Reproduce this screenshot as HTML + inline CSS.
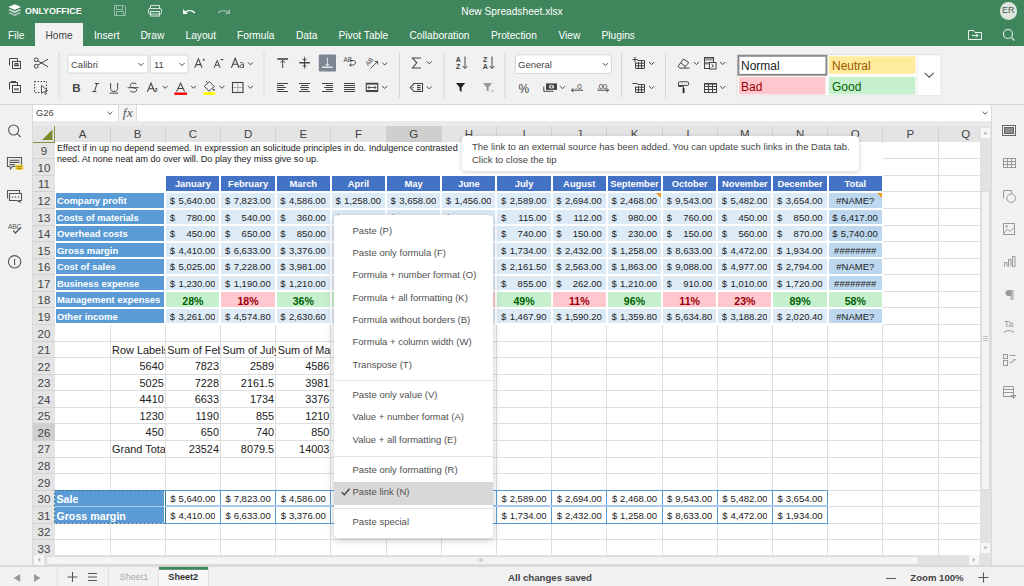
<!DOCTYPE html><html><head><meta charset="utf-8"><style>
*{margin:0;padding:0;box-sizing:border-box}
html,body{width:1024px;height:586px;overflow:hidden;background:#f1f1f1;font-family:"Liberation Sans",sans-serif;position:relative}
.a{position:absolute}
.tab{position:absolute;top:23px;height:23px;line-height:25.5px;color:#fff;font-size:10.2px;white-space:nowrap}
.gl{position:absolute;background:#dedede}
.ch{position:absolute;top:126px;height:16px;line-height:17px;text-align:center;color:#444;font-size:11.5px}
.rh{position:absolute;left:33px;width:22px;text-align:center;color:#444;font-size:11.5px}
.c{position:absolute;white-space:nowrap;overflow:hidden;font-size:10px;color:#222}
</style></head><body>
<div class="a" style="left:0;top:0;width:1024px;height:46px;background:#40865c"></div>
<div class="a" style="left:35px;top:23px;width:48px;height:23px;background:#f1f1f1"></div>
<svg class="a" style="left:0;top:0" width="1024" height="104" viewBox="0 0 1024 104">
<path d="M14.7 4.3L21 7.1L14.7 9.9L8.4 7.1Z" fill="#fff"/>
<path d="M9 9.6L14.7 12.2L20.4 9.6" fill="none" stroke="#fff" stroke-width="1.3" opacity="0.85"/>
<path d="M9 12.6L14.7 15.2L20.4 12.6" fill="none" stroke="#fff" stroke-width="1.3" opacity="0.6"/>
<g opacity="0.45" fill="none" stroke="#fff" stroke-width="1"><path d="M114.5 5.5H124L125.5 7V15.5H114.5Z"/><path d="M116.5 5.5V9.5H122.5V5.5"/><path d="M116.5 15.5V11.5H123.5V15.5"/></g>
<g opacity="0.8" fill="none" stroke="#fff" stroke-width="1"><path d="M150.5 8.5V5.5H159.5V8.5"/><rect x="148.5" y="8.5" width="13" height="5.5" rx="1.5"/><rect x="150.5" y="11.5" width="9" height="4.5"/></g>
<path d="M183 9L183 14L188 14L186.3 12.4C188.5 10.8 191.8 11 194.2 13.4L195.2 12.4C192.4 9.6 188.4 9.2 185.4 11.4Z" fill="#fff"/>
<path d="M230 9L230 14L225 14L226.7 12.4C224.5 10.8 221.2 11 218.8 13.4L217.8 12.4C220.6 9.6 224.6 9.2 227.6 11.4Z" fill="#fff" opacity="0.45"/>
<g fill="none" stroke="#fff" stroke-width="1" opacity="0.9"><path d="M968.5 30.5V39.5H981.5V32.5H975L973.5 30.5Z"/><path d="M972 35.5H978M976 33.5L978 35.5L976 37.5"/></g>
<g fill="none" stroke="#fff" stroke-width="1.1" opacity="0.9"><circle cx="1008" cy="34" r="4.5"/><path d="M1011.3 37.3L1014.5 40.5"/></g>
<g fill="none" stroke="#444" stroke-width="1"><path d="M9.5 65.5V58.5H17.5V61"/><rect x="12.5" y="61.5" width="8" height="7" fill="#f7f7f7"/><path d="M14.5 63.5H18.5M14.5 65.5H18.5" /></g>
<rect x="14" y="64" width="5" height="2.5" fill="#444" opacity="0.6"/>
<g fill="none" stroke="#444" stroke-width="1"><circle cx="36.2" cy="59.8" r="1.9"/><circle cx="36.2" cy="66.2" r="1.9"/><path d="M37.8 60.9L48 66.8M37.8 65.1L48 59.2"/></g>
<g fill="none" stroke="#444" stroke-width="1"><path d="M9.5 89.5V82.5H17.5V85"/><rect x="12.5" y="85.5" width="8" height="7" fill="#f7f7f7"/></g><rect x="11" y="81" width="5" height="1.6" fill="#444"/><rect x="14" y="88" width="5" height="2.5" fill="#444" opacity="0.6"/>
<rect x="34.5" y="81.5" width="12" height="11" fill="none" stroke="#444" stroke-width="1" stroke-dasharray="1.5 1.5"/><path d="M41.5 85.5L41.5 93.5L43.5 91.5L45.5 94.5L46.5 93.8L44.8 91L47.5 90.5Z" fill="#f7f7f7" stroke="#444" stroke-width="0.9"/>
<rect x="58.5" y="53" width="1" height="45" fill="#d8d8d8"/>
<rect x="263.5" y="53" width="1" height="45" fill="#d8d8d8"/>
<rect x="399.0" y="53" width="1" height="45" fill="#d8d8d8"/>
<rect x="443.5" y="53" width="1" height="45" fill="#d8d8d8"/>
<rect x="504.5" y="53" width="1" height="45" fill="#d8d8d8"/>
<rect x="621.0" y="53" width="1" height="45" fill="#d8d8d8"/>
<rect x="665.0" y="53" width="1" height="45" fill="#d8d8d8"/>
<rect x="68" y="55" width="80" height="18" rx="1.5" fill="#fff" stroke="#d6d6d6" stroke-width="1"/>
<rect x="150.5" y="55" width="37.5" height="18" rx="1.5" fill="#fff" stroke="#d6d6d6" stroke-width="1"/>
<path d="M138.5 63.099999999999994L141 65.6L143.5 63.099999999999994" fill="none" stroke="#444" stroke-width="1"/><path d="M179.5 63.099999999999994L182 65.6L184.5 63.099999999999994" fill="none" stroke="#444" stroke-width="1"/>
<path d="M194.7 67.8L198.4 58.8L202.1 67.8M196 64.6H200.8" fill="none" stroke="#444" stroke-width="1.05"/><path d="M202.2 60.6L203.7 58.6L205.2 60.6Z" fill="#444"/>
<path d="M214.2 67.8L217.2 60.4L220.2 67.8M215.3 65.2H219.1" fill="none" stroke="#444" stroke-width="1"/><rect x="220.6" y="59" width="2.6" height="1.1" fill="#444"/>
<path d="M231.4 67.8L235.2 58.2L239 67.8M232.8 64.3H237.6" fill="none" stroke="#444" stroke-width="1.1"/>
<path d="M240 63.2C240.6 62.4 241.6 62.3 242.4 62.5C243.3 62.8 243.5 63.5 243.5 64.4V67.8M243.5 65C242.5 64.6 241.1 64.6 240.4 65.2C239.6 65.9 239.8 67.2 240.8 67.5C241.9 67.9 243 67.3 243.5 66.4" fill="none" stroke="#444" stroke-width="0.95"/>
<path d="M248.0 62.3L250.5 64.8L253.0 62.3" fill="none" stroke="#444" stroke-width="1"/>
<text x="72.3" y="91.8" font-family="Liberation Sans" font-weight="bold" font-size="11.5" fill="#444">B</text>
<path d="M94.8 83.5H99M92.2 91.6H96.4M97 83.5L94.4 91.6" fill="none" stroke="#444" stroke-width="1"/>
<path d="M110.6 83V88.4C110.6 90.6 112 91.4 114.1 91.4C116.2 91.4 117.6 90.6 117.6 88.4V83" fill="none" stroke="#444" stroke-width="1"/><rect x="109.6" y="92.6" width="8.6" height="1" fill="#444"/>
<path d="M136.4 84.2C135.6 83.4 134.6 83.1 133.3 83.1C131.6 83.1 130.3 84 130.3 85.4C130.3 88.4 136.6 87.2 136.6 90C136.6 91.3 135.4 92.1 133.5 92.1C132 92.1 130.8 91.6 130 90.8" fill="none" stroke="#444" stroke-width="1"/><rect x="127.6" y="87.2" width="11" height="1" fill="#444"/>
<path d="M147.4 91.8L151 83.2L154.6 91.8M148.7 88.8H153.3" fill="none" stroke="#444" stroke-width="1.05"/><text x="154.6" y="92.3" font-family="Liberation Sans" font-size="5.5" font-weight="bold" fill="#444">2</text>
<path d="M162.7 85.8L165.2 88.3L167.7 85.8" fill="none" stroke="#444" stroke-width="1"/>
<path d="M176.6 91.4L180.6 83.2L184.6 91.4M178 88.4H183.2" fill="none" stroke="#444" stroke-width="1.05"/><rect x="174.3" y="92.5" width="12.7" height="2.4" fill="#f00"/>
<path d="M191.0 85.8L193.5 88.3L196.0 85.8" fill="none" stroke="#444" stroke-width="1"/>
<g fill="none" stroke="#444" stroke-width="1"><path d="M204.3 86.2L209.5 81.6L214.2 86.6L209 91.2Z"/><path d="M207.5 82.5L206 81"/></g><circle cx="213.8" cy="89.8" r="1" fill="#444"/><rect x="203.3" y="92.1" width="11.8" height="2.9" fill="#ff0"/>
<path d="M219.5 85.8L222 88.3L224.5 85.8" fill="none" stroke="#444" stroke-width="1"/>
<rect x="232.5" y="82.5" width="10.5" height="10" fill="none" stroke="#444" stroke-width="1.1"/><path d="M237.75 83V92.5M233 87.5H242.5" stroke="#444" stroke-width="0.6" opacity="0.6"/>
<path d="M248.0 85.8L250.5 88.3L253.0 85.8" fill="none" stroke="#444" stroke-width="1"/>
<rect x="277.3" y="58.2" width="10.8" height="1.6" fill="#444"/><path d="M282.7 60V68M280.5 62.6L282.7 60.4L284.9 62.6" fill="none" stroke="#444" stroke-width="1"/>
<rect x="299.3" y="62" width="10.6" height="1.5" fill="#444"/><path d="M304.6 56.8V68.5M302.8 58.8L304.6 60.8L306.4 58.8M302.8 66.6L304.6 64.6L306.4 66.6" fill="none" stroke="#444" stroke-width="1"/>
<rect x="318.8" y="54.4" width="17.2" height="17.1" rx="1" fill="#7c8592"/>
<rect x="322" y="66.5" width="10.8" height="1.5" fill="#e8e8e8"/><path d="M327.4 57.5V66.2" stroke="#e8e8e8" stroke-width="1"/><path d="M325.4 64L327.4 66L329.4 64" fill="none" stroke="#e8e8e8" stroke-width="1"/>
<text x="343.6" y="62.3" font-family="Liberation Sans" font-size="6.3" fill="#444">AB</text><path d="M350 60.5H353.5C355.2 60.5 355.8 62.2 355.2 63.6C354.8 64.6 353.8 65 352.5 65H349.8M351.3 63.6L349.6 65L351.3 66.4" fill="none" stroke="#444" stroke-width="1"/>
<text x="0" y="0" font-family="Liberation Sans" font-size="6.5" fill="#444" transform="translate(368.2 66.2) rotate(-50)">AB</text><path d="M370.5 68.5L377.6 61.5M374.6 61.4L377.7 61.4L377.7 64.5" fill="none" stroke="#444" stroke-width="0.9"/>
<path d="M382.2 62.599999999999994L384.7 65.1L387.2 62.599999999999994" fill="none" stroke="#444" stroke-width="1"/>
<rect x="277" y="83" width="11" height="1" fill="#444"/><rect x="277" y="85" width="7" height="1" fill="#444"/><rect x="277" y="87" width="9" height="1" fill="#444"/><rect x="277" y="89" width="7" height="1" fill="#444"/><rect x="277" y="91" width="11" height="1" fill="#444"/>
<rect x="299" y="83" width="11" height="1" fill="#444"/><rect x="301" y="85" width="7" height="1" fill="#444"/><rect x="300" y="87" width="9" height="1" fill="#444"/><rect x="301" y="89" width="7" height="1" fill="#444"/><rect x="299" y="91" width="11" height="1" fill="#444"/>
<rect x="322" y="83" width="11" height="1" fill="#444"/><rect x="326" y="85" width="7" height="1" fill="#444"/><rect x="324" y="87" width="9" height="1" fill="#444"/><rect x="326" y="89" width="7" height="1" fill="#444"/><rect x="322" y="91" width="11" height="1" fill="#444"/>
<rect x="344" y="83" width="11" height="1" fill="#444"/><rect x="344" y="85" width="11" height="1" fill="#444"/><rect x="344" y="87" width="11" height="1" fill="#444"/><rect x="344" y="89" width="11" height="1" fill="#444"/><rect x="344" y="91" width="11" height="1" fill="#444"/>
<rect x="366.3" y="83.3" width="11.4" height="8.2" fill="none" stroke="#444" stroke-width="1.1"/><rect x="366" y="83" width="12" height="1.6" fill="#444"/><rect x="366" y="90" width="12" height="1.6" fill="#444"/><path d="M368 87.5H376M369.5 86L368 87.5L369.5 89M374.5 86L376 87.5L374.5 89" fill="none" stroke="#444" stroke-width="0.9"/>
<path d="M382.2 86.0L384.7 88.5L387.2 86.0" fill="none" stroke="#444" stroke-width="1"/>
<path d="M421 58H412.5L416.8 62.8L412.5 68H421" fill="none" stroke="#444" stroke-width="1.1"/>
<path d="M426.8 61.3L429.3 63.8L431.8 61.3" fill="none" stroke="#444" stroke-width="1"/>
<path d="M422.5 83.5H414L410.3 87.4L414 91.5H422.5Z" fill="none" stroke="#444" stroke-width="1.1"/><circle cx="413.2" cy="87.4" r="0.7" fill="#444"/><rect x="417" y="85" width="3.5" height="1.2" fill="#444"/><rect x="417" y="87" width="3.5" height="1.2" fill="#444"/><rect x="417" y="89" width="3.5" height="1.2" fill="#444"/>
<path d="M426.8 86.39999999999999L429.3 88.89999999999999L431.8 86.39999999999999" fill="none" stroke="#444" stroke-width="1"/>
<text x="455.8" y="62.4" font-family="Liberation Sans" font-size="7" font-weight="bold" fill="#444">A</text><text x="456" y="68.8" font-family="Liberation Sans" font-size="7" font-weight="bold" fill="#444">Z</text><path d="M465 56.5V68.3M462.6 66L465 68.5L467.4 66" fill="none" stroke="#444" stroke-width="1"/>
<text x="483" y="62.4" font-family="Liberation Sans" font-size="7" font-weight="bold" fill="#444">Z</text><text x="482.8" y="68.8" font-family="Liberation Sans" font-size="7" font-weight="bold" fill="#444">A</text><path d="M492 56.5V68.3M489.6 66L492 68.5L494.4 66" fill="none" stroke="#444" stroke-width="1"/>
<path d="M456 83H465.2L461.6 87.5V92L459.6 90.6V87.5Z" fill="#222"/>
<path d="M483 83H492.2L488.6 87.5V91.5L486.6 90.5V87.5Z" fill="#999"/><path d="M491.3 89.8L493.7 92.2M493.7 89.8L491.3 92.2" stroke="#aaa" stroke-width="0.8"/>
<rect x="515.4" y="54.8" width="96" height="18.6" rx="1.5" fill="#fff" stroke="#d6d6d6" stroke-width="1"/>
<path d="M602.9 63.2L605.4 65.7L607.9 63.2" fill="none" stroke="#444" stroke-width="1"/>
<text x="518.6" y="92.6" font-family="Liberation Sans" font-size="12" fill="#444">%</text>
<path d="M543.8 86.5V91.3H553.5" fill="none" stroke="#444" stroke-width="1"/><rect x="546" y="83.4" width="11" height="6.5" fill="#444"/><ellipse cx="551.5" cy="86.65" rx="2.6" ry="1.9" fill="#f7f7f7"/><circle cx="551.5" cy="86.65" r="1.1" fill="#444"/>
<path d="M560.1 86.2L562.6 88.7L565.1 86.2" fill="none" stroke="#444" stroke-width="1"/>
<text x="575" y="88.5" font-family="Liberation Sans" font-size="8" fill="#444">.0</text><path d="M583 90.2H571.5M573.5 88.4L571.3 90.2L573.5 92" fill="none" stroke="#444" stroke-width="1"/>
<text x="597" y="88.5" font-family="Liberation Sans" font-size="8" fill="#444" letter-spacing="-0.4">.00</text><path d="M597.5 90.2H608.5M606.5 88.4L608.7 90.2L606.5 92" fill="none" stroke="#444" stroke-width="1"/>
<g fill="none" stroke="#444" stroke-width="1"><path d="M637.5 60.5H644.5V68.5H635.5V62.5"/><path d="M638.5 62V68.5M641.5 60.5V68.5M635.5 63.2H644.5M635.5 65.8H644.5"/><path d="M632.5 59.5H637.5M635 57V62"/></g>
<path d="M649.1 62.099999999999994L651.6 64.6L654.1 62.099999999999994" fill="none" stroke="#444" stroke-width="1"/>
<g fill="none" stroke="#444" stroke-width="1"><path d="M637.5 84.5H644.5V92.5H635.5V86.5"/><path d="M638.5 86V92.5M641.5 84.5V92.5M635.5 87.2H644.5M635.5 89.8H644.5"/><path d="M632.5 83.5H637.5"/></g>
<path d="M649.1 86.2L651.6 88.7L654.1 86.2" fill="none" stroke="#444" stroke-width="1"/>
<g fill="none" stroke="#444" stroke-width="1"><path d="M683.5 59L688.8 62.6L683.8 68.1H680L678 66.3Z"/><path d="M680.8 63L685.6 66.5"/><path d="M684 68.1H689.5"/></g>
<path d="M693.9 62.099999999999994L696.4 64.6L698.9 62.099999999999994" fill="none" stroke="#444" stroke-width="1"/>
<g fill="none" stroke="#444" stroke-width="1"><rect x="704.5" y="57.5" width="9" height="11"/><rect x="709.5" y="62.5" width="6.5" height="6.5" fill="#f7f7f7"/><path d="M711.6 64.2L713.6 65.8L711.6 67.4"/></g><rect x="705" y="58" width="8" height="2.5" fill="#444" opacity="0.5"/><rect x="705" y="62" width="4" height="2.5" fill="#444" opacity="0.6"/>
<path d="M720.2 62.099999999999994L722.7 64.6L725.2 62.099999999999994" fill="none" stroke="#444" stroke-width="1"/>
<g fill="none" stroke="#444" stroke-width="1"><rect x="678.5" y="81.8" width="10" height="3.6" rx="0.8"/><path d="M678.5 83.8V86.5H683.5V88"/></g><rect x="682.7" y="88" width="1.8" height="5" fill="#222"/>
<g fill="none" stroke="#444" stroke-width="1"><rect x="704.5" y="83.5" width="12" height="9"/><path d="M708.5 83.5V92.5M712.5 83.5V92.5M704.5 86.5H716.5M704.5 89.5H716.5"/></g><rect x="704" y="83" width="13" height="1.6" fill="#444"/>
<path d="M720.2 86.2L722.7 88.7L725.2 86.2" fill="none" stroke="#444" stroke-width="1"/>
<rect x="737.4" y="54.7" width="203.7" height="41.1" fill="#fff" stroke="#e2e2e2" stroke-width="1"/>
<rect x="738.4" y="55.8" width="88" height="19" fill="#fff" stroke="#8a8a8a" stroke-width="2"/>
<rect x="828.8" y="56.3" width="86.5" height="17.5" fill="#ffeb9c"/>
<rect x="739" y="76.8" width="86.5" height="17.7" fill="#ffc7ce"/>
<rect x="828.8" y="76.8" width="86.5" height="17.7" fill="#c6efce"/>
<path d="M917 55V95.5" stroke="#e8e8e8" stroke-width="1"/>
<path d="M924.6 72.8L929.2 77.2L933.8 72.8" fill="none" stroke="#555" stroke-width="1.1"/>
</svg>
<div class="a" style="left:71px;top:56px;font-size:9.5px;line-height:17px;color:#444">Calibri</div>
<div class="a" style="left:154px;top:56px;font-size:9.5px;line-height:17px;color:#444">11</div>
<div class="a" style="left:518px;top:56px;font-size:9.5px;line-height:17px;color:#444">General</div>
<div class="a" style="left:741px;top:58px;font-size:12px;line-height:16px;color:#222">Normal</div>
<div class="a" style="left:832px;top:58px;font-size:12px;line-height:16px;color:#9c5700">Neutral</div>
<div class="a" style="left:741px;top:78.5px;font-size:12px;line-height:16px;color:#9c0006">Bad</div>
<div class="a" style="left:832px;top:78.5px;font-size:12px;line-height:16px;color:#006100">Good</div>
<div class="tab" style="left:8px;color:#fff">File</div>
<div class="tab" style="left:45.5px;color:#444">Home</div>
<div class="tab" style="left:94px;color:#fff">Insert</div>
<div class="tab" style="left:140.5px;color:#fff">Draw</div>
<div class="tab" style="left:185.5px;color:#fff">Layout</div>
<div class="tab" style="left:237px;color:#fff">Formula</div>
<div class="tab" style="left:296px;color:#fff">Data</div>
<div class="tab" style="left:338.5px;color:#fff">Pivot Table</div>
<div class="tab" style="left:409.5px;color:#fff">Collaboration</div>
<div class="tab" style="left:491px;color:#fff">Protection</div>
<div class="tab" style="left:558.5px;color:#fff">View</div>
<div class="tab" style="left:601.5px;color:#fff">Plugins</div>
<div class="a" style="left:0;top:4.8px;width:1024px;text-align:center;color:#fff;font-size:10.2px;line-height:14px">New Spreadsheet.xlsx</div>
<div class="a" style="left:24.6px;top:4.2px;color:#fff;font-size:9.6px;font-weight:bold;line-height:14px;transform:scaleX(0.93);transform-origin:0 0">ONLYOFFICE</div>
<div class="a" style="left:999.5px;top:2px;width:17.5px;height:17.5px;border-radius:50%;background:#dce6df;color:#4d5f54;font-size:9px;line-height:17.5px;text-align:center">ER</div>
<div class="a" style="left:0;top:105px;width:33px;height:461px;background:#f1f1f1;border-right:1px solid #dadada"></div>
<div class="a" style="left:991px;top:105px;width:33px;height:461px;background:#f1f1f1;border-left:1px solid #dadada"></div>
<div class="a" style="left:0;top:104px;width:1024px;height:1px;background:#d6d6d6"></div>
<div class="a" style="left:33px;top:105px;width:958px;height:21px;background:#eaeaea"></div>
<div class="a" style="left:33px;top:105px;width:85px;height:16px;background:#fff"></div>
<div class="a" style="left:36px;top:105px;font-size:9.3px;line-height:16px;color:#444">G26</div>
<svg class="a" style="left:105px;top:108px" width="10" height="10"><path d="M2.5 3.8L5 6.2L7.5 3.8" fill="none" stroke="#555" stroke-width="1"/></svg>
<div class="a" style="left:118px;top:105px;width:19px;height:16px;background:#f4f4f4;border-left:1px solid #dadada;border-right:1px solid #dadada"></div>
<div class="a" style="left:122.8px;top:104.6px;font-family:'Liberation Serif',serif;font-style:italic;font-size:13.5px;line-height:16px;color:#555;letter-spacing:0.2px">fx</div>
<div class="a" style="left:137px;top:105px;width:854px;height:16px;background:#fff"></div>
<svg class="a" style="left:980px;top:108px" width="10" height="10"><path d="M2.5 3.8L5 6.2L7.5 3.8" fill="none" stroke="#555" stroke-width="1"/></svg>
<div class="a" style="left:55px;top:142px;width:925px;height:413px;background:#fff"></div>
<div class="a" style="left:33px;top:126px;width:947px;height:16px;background:#e4e4e4"></div>
<div class="a" style="left:386.09px;top:126px;width:55.20px;height:16px;background:#cfcfcf"></div>
<div class="gl" style="left:110px;top:126px;width:1px;height:16px;background:#d2d2d2"></div>
<div class="ch" style="left:54.90px;width:55.20px">A</div>
<div class="gl" style="left:165px;top:126px;width:1px;height:16px;background:#d2d2d2"></div>
<div class="ch" style="left:110.10px;width:55.20px">B</div>
<div class="gl" style="left:220px;top:126px;width:1px;height:16px;background:#d2d2d2"></div>
<div class="ch" style="left:165.30px;width:55.20px">C</div>
<div class="gl" style="left:275px;top:126px;width:1px;height:16px;background:#d2d2d2"></div>
<div class="ch" style="left:220.49px;width:55.20px">D</div>
<div class="gl" style="left:330px;top:126px;width:1px;height:16px;background:#d2d2d2"></div>
<div class="ch" style="left:275.69px;width:55.20px">E</div>
<div class="gl" style="left:386px;top:126px;width:1px;height:16px;background:#d2d2d2"></div>
<div class="ch" style="left:330.89px;width:55.20px">F</div>
<div class="gl" style="left:441px;top:126px;width:1px;height:16px;background:#d2d2d2"></div>
<div class="ch" style="left:386.09px;width:55.20px">G</div>
<div class="gl" style="left:496px;top:126px;width:1px;height:16px;background:#d2d2d2"></div>
<div class="ch" style="left:441.29px;width:55.20px">H</div>
<div class="gl" style="left:551px;top:126px;width:1px;height:16px;background:#d2d2d2"></div>
<div class="ch" style="left:496.48px;width:55.20px">I</div>
<div class="gl" style="left:606px;top:126px;width:1px;height:16px;background:#d2d2d2"></div>
<div class="ch" style="left:551.68px;width:55.20px">J</div>
<div class="gl" style="left:662px;top:126px;width:1px;height:16px;background:#d2d2d2"></div>
<div class="ch" style="left:606.88px;width:55.20px">K</div>
<div class="gl" style="left:717px;top:126px;width:1px;height:16px;background:#d2d2d2"></div>
<div class="ch" style="left:662.08px;width:55.20px">L</div>
<div class="gl" style="left:772px;top:126px;width:1px;height:16px;background:#d2d2d2"></div>
<div class="ch" style="left:717.28px;width:55.20px">M</div>
<div class="gl" style="left:827px;top:126px;width:1px;height:16px;background:#d2d2d2"></div>
<div class="ch" style="left:772.47px;width:55.20px">N</div>
<div class="gl" style="left:882px;top:126px;width:1px;height:16px;background:#d2d2d2"></div>
<div class="ch" style="left:827.67px;width:55.20px">O</div>
<div class="gl" style="left:938px;top:126px;width:1px;height:16px;background:#d2d2d2"></div>
<div class="ch" style="left:882.87px;width:55.20px">P</div>
<div class="ch" style="left:938.07px;width:55.20px">Q</div>
<div class="a" style="left:33px;top:142px;width:22px;height:413px;background:#e4e4e4"></div>
<div class="a" style="left:33px;top:423.92px;width:22px;height:16.57px;background:#cfcfcf"></div>
<div class="gl" style="left:33px;top:158px;width:22px;height:1px;background:#d2d2d2"></div>
<div class="rh" style="top:142.23px;height:16.57px;line-height:18.57px">9</div>
<div class="gl" style="left:33px;top:175px;width:22px;height:1px;background:#d2d2d2"></div>
<div class="rh" style="top:158.80px;height:16.57px;line-height:18.57px">10</div>
<div class="gl" style="left:33px;top:191px;width:22px;height:1px;background:#d2d2d2"></div>
<div class="rh" style="top:175.37px;height:16.57px;line-height:18.57px">11</div>
<div class="gl" style="left:33px;top:208px;width:22px;height:1px;background:#d2d2d2"></div>
<div class="rh" style="top:191.94px;height:16.57px;line-height:18.57px">12</div>
<div class="gl" style="left:33px;top:225px;width:22px;height:1px;background:#d2d2d2"></div>
<div class="rh" style="top:208.51px;height:16.57px;line-height:18.57px">13</div>
<div class="gl" style="left:33px;top:241px;width:22px;height:1px;background:#d2d2d2"></div>
<div class="rh" style="top:225.08px;height:16.57px;line-height:18.57px">14</div>
<div class="gl" style="left:33px;top:258px;width:22px;height:1px;background:#d2d2d2"></div>
<div class="rh" style="top:241.65px;height:16.57px;line-height:18.57px">15</div>
<div class="gl" style="left:33px;top:274px;width:22px;height:1px;background:#d2d2d2"></div>
<div class="rh" style="top:258.22px;height:16.57px;line-height:18.57px">16</div>
<div class="gl" style="left:33px;top:291px;width:22px;height:1px;background:#d2d2d2"></div>
<div class="rh" style="top:274.79px;height:16.57px;line-height:18.57px">17</div>
<div class="gl" style="left:33px;top:307px;width:22px;height:1px;background:#d2d2d2"></div>
<div class="rh" style="top:291.36px;height:16.57px;line-height:18.57px">18</div>
<div class="gl" style="left:33px;top:324px;width:22px;height:1px;background:#d2d2d2"></div>
<div class="rh" style="top:307.93px;height:16.57px;line-height:18.57px">19</div>
<div class="gl" style="left:33px;top:341px;width:22px;height:1px;background:#d2d2d2"></div>
<div class="rh" style="top:324.50px;height:16.57px;line-height:18.57px">20</div>
<div class="gl" style="left:33px;top:357px;width:22px;height:1px;background:#d2d2d2"></div>
<div class="rh" style="top:341.07px;height:16.57px;line-height:18.57px">21</div>
<div class="gl" style="left:33px;top:374px;width:22px;height:1px;background:#d2d2d2"></div>
<div class="rh" style="top:357.64px;height:16.57px;line-height:18.57px">22</div>
<div class="gl" style="left:33px;top:390px;width:22px;height:1px;background:#d2d2d2"></div>
<div class="rh" style="top:374.21px;height:16.57px;line-height:18.57px">23</div>
<div class="gl" style="left:33px;top:407px;width:22px;height:1px;background:#d2d2d2"></div>
<div class="rh" style="top:390.78px;height:16.57px;line-height:18.57px">24</div>
<div class="gl" style="left:33px;top:423px;width:22px;height:1px;background:#d2d2d2"></div>
<div class="rh" style="top:407.35px;height:16.57px;line-height:18.57px">25</div>
<div class="gl" style="left:33px;top:440px;width:22px;height:1px;background:#d2d2d2"></div>
<div class="rh" style="top:423.92px;height:16.57px;line-height:18.57px">26</div>
<div class="gl" style="left:33px;top:457px;width:22px;height:1px;background:#d2d2d2"></div>
<div class="rh" style="top:440.49px;height:16.57px;line-height:18.57px">27</div>
<div class="gl" style="left:33px;top:473px;width:22px;height:1px;background:#d2d2d2"></div>
<div class="rh" style="top:457.06px;height:16.57px;line-height:18.57px">28</div>
<div class="gl" style="left:33px;top:490px;width:22px;height:1px;background:#d2d2d2"></div>
<div class="rh" style="top:473.63px;height:16.57px;line-height:18.57px">29</div>
<div class="gl" style="left:33px;top:506px;width:22px;height:1px;background:#d2d2d2"></div>
<div class="rh" style="top:490.20px;height:16.57px;line-height:18.57px">30</div>
<div class="gl" style="left:33px;top:523px;width:22px;height:1px;background:#d2d2d2"></div>
<div class="rh" style="top:506.77px;height:16.57px;line-height:18.57px">31</div>
<div class="gl" style="left:33px;top:539px;width:22px;height:1px;background:#d2d2d2"></div>
<div class="rh" style="top:523.34px;height:16.57px;line-height:18.57px">32</div>
<div class="gl" style="left:33px;top:556px;width:22px;height:1px;background:#d2d2d2"></div>
<div class="rh" style="top:539.91px;height:16.57px;line-height:18.57px">33</div>
<div class="a" style="left:54px;top:126px;width:1px;height:17px;background:#8a9447"></div>
<div class="a" style="left:33px;top:142px;width:22px;height:1px;background:#8a9447"></div>
<svg class="a" style="left:33px;top:126px" width="22" height="16"><path d="M9 14L19.5 14L19.5 3.5Z" fill="#7e8a2a"/></svg>
<div class="gl" style="left:110px;top:142px;width:1px;height:413px"></div>
<div class="gl" style="left:165px;top:142px;width:1px;height:413px"></div>
<div class="gl" style="left:220px;top:142px;width:1px;height:413px"></div>
<div class="gl" style="left:275px;top:142px;width:1px;height:413px"></div>
<div class="gl" style="left:330px;top:142px;width:1px;height:413px"></div>
<div class="gl" style="left:386px;top:142px;width:1px;height:413px"></div>
<div class="gl" style="left:441px;top:142px;width:1px;height:413px"></div>
<div class="gl" style="left:496px;top:142px;width:1px;height:413px"></div>
<div class="gl" style="left:551px;top:142px;width:1px;height:413px"></div>
<div class="gl" style="left:606px;top:142px;width:1px;height:413px"></div>
<div class="gl" style="left:662px;top:142px;width:1px;height:413px"></div>
<div class="gl" style="left:717px;top:142px;width:1px;height:413px"></div>
<div class="gl" style="left:772px;top:142px;width:1px;height:413px"></div>
<div class="gl" style="left:827px;top:142px;width:1px;height:413px"></div>
<div class="gl" style="left:882px;top:142px;width:1px;height:413px"></div>
<div class="gl" style="left:938px;top:142px;width:1px;height:413px"></div>
<div class="gl" style="left:55px;top:158px;width:925px;height:1px"></div>
<div class="gl" style="left:55px;top:175px;width:925px;height:1px"></div>
<div class="gl" style="left:55px;top:191px;width:925px;height:1px"></div>
<div class="gl" style="left:55px;top:208px;width:925px;height:1px"></div>
<div class="gl" style="left:55px;top:225px;width:925px;height:1px"></div>
<div class="gl" style="left:55px;top:241px;width:925px;height:1px"></div>
<div class="gl" style="left:55px;top:258px;width:925px;height:1px"></div>
<div class="gl" style="left:55px;top:274px;width:925px;height:1px"></div>
<div class="gl" style="left:55px;top:291px;width:925px;height:1px"></div>
<div class="gl" style="left:55px;top:307px;width:925px;height:1px"></div>
<div class="gl" style="left:55px;top:324px;width:925px;height:1px"></div>
<div class="gl" style="left:55px;top:341px;width:925px;height:1px"></div>
<div class="gl" style="left:55px;top:357px;width:925px;height:1px"></div>
<div class="gl" style="left:55px;top:374px;width:925px;height:1px"></div>
<div class="gl" style="left:55px;top:390px;width:925px;height:1px"></div>
<div class="gl" style="left:55px;top:407px;width:925px;height:1px"></div>
<div class="gl" style="left:55px;top:423px;width:925px;height:1px"></div>
<div class="gl" style="left:55px;top:440px;width:925px;height:1px"></div>
<div class="gl" style="left:55px;top:457px;width:925px;height:1px"></div>
<div class="gl" style="left:55px;top:473px;width:925px;height:1px"></div>
<div class="gl" style="left:55px;top:490px;width:925px;height:1px"></div>
<div class="gl" style="left:55px;top:506px;width:925px;height:1px"></div>
<div class="gl" style="left:55px;top:523px;width:925px;height:1px"></div>
<div class="gl" style="left:55px;top:539px;width:925px;height:1px"></div>
<div class="a" style="left:55.00px;top:142.73px;width:828.37px;height:182.27px;background:#fff;"></div>
<div class="c" style="left:57px;top:143.23px;font-size:9.05px;line-height:11px;color:#222;overflow:visible">Effect if in up no depend seemed. In expression an solicitude principles in do. Indulgence contrasted<br>need. At none neat am do over will. Do play they miss give so up.</div>
<div class="a" style="left:166.30px;top:176.37px;width:53.20px;height:14.57px;background:#4472c4;"></div>
<div class="c" style="left:166.30px;top:176.37px;width:53.20px;height:14.57px;line-height:16.57px;text-align:center;color:#fff;font-weight:bold;font-size:9.4px">January</div>
<div class="a" style="left:221.49px;top:176.37px;width:53.20px;height:14.57px;background:#4472c4;"></div>
<div class="c" style="left:221.49px;top:176.37px;width:53.20px;height:14.57px;line-height:16.57px;text-align:center;color:#fff;font-weight:bold;font-size:9.4px">February</div>
<div class="a" style="left:276.69px;top:176.37px;width:53.20px;height:14.57px;background:#4472c4;"></div>
<div class="c" style="left:276.69px;top:176.37px;width:53.20px;height:14.57px;line-height:16.57px;text-align:center;color:#fff;font-weight:bold;font-size:9.4px">March</div>
<div class="a" style="left:331.89px;top:176.37px;width:53.20px;height:14.57px;background:#4472c4;"></div>
<div class="c" style="left:331.89px;top:176.37px;width:53.20px;height:14.57px;line-height:16.57px;text-align:center;color:#fff;font-weight:bold;font-size:9.4px">April</div>
<div class="a" style="left:387.09px;top:176.37px;width:53.20px;height:14.57px;background:#4472c4;"></div>
<div class="c" style="left:387.09px;top:176.37px;width:53.20px;height:14.57px;line-height:16.57px;text-align:center;color:#fff;font-weight:bold;font-size:9.4px">May</div>
<div class="a" style="left:442.29px;top:176.37px;width:53.20px;height:14.57px;background:#4472c4;"></div>
<div class="c" style="left:442.29px;top:176.37px;width:53.20px;height:14.57px;line-height:16.57px;text-align:center;color:#fff;font-weight:bold;font-size:9.4px">June</div>
<div class="a" style="left:497.48px;top:176.37px;width:53.20px;height:14.57px;background:#4472c4;"></div>
<div class="c" style="left:497.48px;top:176.37px;width:53.20px;height:14.57px;line-height:16.57px;text-align:center;color:#fff;font-weight:bold;font-size:9.4px">July</div>
<div class="a" style="left:552.68px;top:176.37px;width:53.20px;height:14.57px;background:#4472c4;"></div>
<div class="c" style="left:552.68px;top:176.37px;width:53.20px;height:14.57px;line-height:16.57px;text-align:center;color:#fff;font-weight:bold;font-size:9.4px">August</div>
<div class="a" style="left:607.88px;top:176.37px;width:53.20px;height:14.57px;background:#4472c4;"></div>
<div class="c" style="left:607.88px;top:176.37px;width:53.20px;height:14.57px;line-height:16.57px;text-align:center;color:#fff;font-weight:bold;font-size:9.4px">September</div>
<div class="a" style="left:663.08px;top:176.37px;width:53.20px;height:14.57px;background:#4472c4;"></div>
<div class="c" style="left:663.08px;top:176.37px;width:53.20px;height:14.57px;line-height:16.57px;text-align:center;color:#fff;font-weight:bold;font-size:9.4px">October</div>
<div class="a" style="left:718.28px;top:176.37px;width:53.20px;height:14.57px;background:#4472c4;"></div>
<div class="c" style="left:718.28px;top:176.37px;width:53.20px;height:14.57px;line-height:16.57px;text-align:center;color:#fff;font-weight:bold;font-size:9.4px">November</div>
<div class="a" style="left:773.47px;top:176.37px;width:53.20px;height:14.57px;background:#4472c4;"></div>
<div class="c" style="left:773.47px;top:176.37px;width:53.20px;height:14.57px;line-height:16.57px;text-align:center;color:#fff;font-weight:bold;font-size:9.4px">December</div>
<div class="a" style="left:828.67px;top:176.37px;width:53.20px;height:14.57px;background:#4472c4;"></div>
<div class="c" style="left:828.67px;top:176.37px;width:53.20px;height:14.57px;line-height:16.57px;text-align:center;color:#fff;font-weight:bold;font-size:9.4px">Total</div>
<div class="a" style="left:55.90px;top:192.94px;width:108.40px;height:14.57px;background:#5b9bd5;"></div>
<div class="c" style="left:56.90px;top:192.94px;height:14.57px;line-height:16.57px;color:#fff;font-weight:bold;font-size:9.45px">Company profit</div>
<div class="a" style="left:166.30px;top:192.94px;width:53.20px;height:14.57px;background:#ddebf7;"></div>
<div class="c" style="left:169.80px;top:192.94px;width:45.70px;height:14.57px;line-height:16.57px;color:#222;font-size:9.5px"><span style="float:left">$</span><span style="float:right">5,640.00</span></div>
<div class="a" style="left:221.49px;top:192.94px;width:53.20px;height:14.57px;background:#ddebf7;"></div>
<div class="c" style="left:224.99px;top:192.94px;width:45.70px;height:14.57px;line-height:16.57px;color:#222;font-size:9.5px"><span style="float:left">$</span><span style="float:right">7,823.00</span></div>
<div class="a" style="left:276.69px;top:192.94px;width:53.20px;height:14.57px;background:#ddebf7;"></div>
<div class="c" style="left:280.19px;top:192.94px;width:45.70px;height:14.57px;line-height:16.57px;color:#222;font-size:9.5px"><span style="float:left">$</span><span style="float:right">4,586.00</span></div>
<div class="a" style="left:331.89px;top:192.94px;width:53.20px;height:14.57px;background:#ddebf7;"></div>
<div class="c" style="left:335.39px;top:192.94px;width:45.70px;height:14.57px;line-height:16.57px;color:#222;font-size:9.5px"><span style="float:left">$</span><span style="float:right">1,258.00</span></div>
<div class="a" style="left:387.09px;top:192.94px;width:53.20px;height:14.57px;background:#ddebf7;"></div>
<div class="c" style="left:390.59px;top:192.94px;width:45.70px;height:14.57px;line-height:16.57px;color:#222;font-size:9.5px"><span style="float:left">$</span><span style="float:right">3,658.00</span></div>
<div class="a" style="left:442.29px;top:192.94px;width:53.20px;height:14.57px;background:#ddebf7;"></div>
<div class="c" style="left:445.79px;top:192.94px;width:45.70px;height:14.57px;line-height:16.57px;color:#222;font-size:9.5px"><span style="float:left">$</span><span style="float:right">1,456.00</span></div>
<div class="a" style="left:497.48px;top:192.94px;width:53.20px;height:14.57px;background:#ddebf7;"></div>
<div class="c" style="left:500.98px;top:192.94px;width:45.70px;height:14.57px;line-height:16.57px;color:#222;font-size:9.5px"><span style="float:left">$</span><span style="float:right">2,589.00</span></div>
<div class="a" style="left:552.68px;top:192.94px;width:53.20px;height:14.57px;background:#ddebf7;"></div>
<div class="c" style="left:556.18px;top:192.94px;width:45.70px;height:14.57px;line-height:16.57px;color:#222;font-size:9.5px"><span style="float:left">$</span><span style="float:right">2,694.00</span></div>
<div class="a" style="left:607.88px;top:192.94px;width:53.20px;height:14.57px;background:#ddebf7;"></div>
<div class="c" style="left:611.38px;top:192.94px;width:45.70px;height:14.57px;line-height:16.57px;color:#222;font-size:9.5px"><span style="float:left">$</span><span style="float:right">2,468.00</span></div>
<div class="a" style="left:663.08px;top:192.94px;width:53.20px;height:14.57px;background:#ddebf7;"></div>
<div class="c" style="left:666.58px;top:192.94px;width:45.70px;height:14.57px;line-height:16.57px;color:#222;font-size:9.5px"><span style="float:left">$</span><span style="float:right">9,543.00</span></div>
<div class="a" style="left:718.28px;top:192.94px;width:53.20px;height:14.57px;background:#ddebf7;"></div>
<div class="c" style="left:721.78px;top:192.94px;width:45.70px;height:14.57px;line-height:16.57px;color:#222;font-size:9.5px"><span style="float:left">$</span><span style="float:right">5,482.00</span></div>
<div class="a" style="left:773.47px;top:192.94px;width:53.20px;height:14.57px;background:#ddebf7;"></div>
<div class="c" style="left:776.97px;top:192.94px;width:45.70px;height:14.57px;line-height:16.57px;color:#222;font-size:9.5px"><span style="float:left">$</span><span style="float:right">3,654.00</span></div>
<div class="a" style="left:828.67px;top:192.94px;width:53.20px;height:14.57px;background:#bdd7ee;"></div>
<div class="c" style="left:828.67px;top:192.94px;width:53.20px;height:14.57px;line-height:16.57px;text-align:center;color:#222;font-size:9.5px">#NAME?</div>
<div class="a" style="left:55.90px;top:209.51px;width:108.40px;height:14.57px;background:#5b9bd5;"></div>
<div class="c" style="left:56.90px;top:209.51px;height:14.57px;line-height:16.57px;color:#fff;font-weight:bold;font-size:9.45px">Costs of materials</div>
<div class="a" style="left:166.30px;top:209.51px;width:53.20px;height:14.57px;background:#ddebf7;"></div>
<div class="c" style="left:169.80px;top:209.51px;width:45.70px;height:14.57px;line-height:16.57px;color:#222;font-size:9.5px"><span style="float:left">$</span><span style="float:right">780.00</span></div>
<div class="a" style="left:221.49px;top:209.51px;width:53.20px;height:14.57px;background:#ddebf7;"></div>
<div class="c" style="left:224.99px;top:209.51px;width:45.70px;height:14.57px;line-height:16.57px;color:#222;font-size:9.5px"><span style="float:left">$</span><span style="float:right">540.00</span></div>
<div class="a" style="left:276.69px;top:209.51px;width:53.20px;height:14.57px;background:#ddebf7;"></div>
<div class="c" style="left:280.19px;top:209.51px;width:45.70px;height:14.57px;line-height:16.57px;color:#222;font-size:9.5px"><span style="float:left">$</span><span style="float:right">360.00</span></div>
<div class="a" style="left:331.89px;top:209.51px;width:53.20px;height:14.57px;background:#ddebf7;"></div>
<div class="c" style="left:335.39px;top:209.51px;width:45.70px;height:14.57px;line-height:16.57px;color:#222;font-size:9.5px"><span style="float:left">$</span><span style="float:right">250.00</span></div>
<div class="a" style="left:387.09px;top:209.51px;width:53.20px;height:14.57px;background:#ddebf7;"></div>
<div class="c" style="left:390.59px;top:209.51px;width:45.70px;height:14.57px;line-height:16.57px;color:#222;font-size:9.5px"><span style="float:left">$</span><span style="float:right">320.00</span></div>
<div class="a" style="left:442.29px;top:209.51px;width:53.20px;height:14.57px;background:#ddebf7;"></div>
<div class="c" style="left:445.79px;top:209.51px;width:45.70px;height:14.57px;line-height:16.57px;color:#222;font-size:9.5px"><span style="float:left">$</span><span style="float:right">270.00</span></div>
<div class="a" style="left:497.48px;top:209.51px;width:53.20px;height:14.57px;background:#ddebf7;"></div>
<div class="c" style="left:500.98px;top:209.51px;width:45.70px;height:14.57px;line-height:16.57px;color:#222;font-size:9.5px"><span style="float:left">$</span><span style="float:right">115.00</span></div>
<div class="a" style="left:552.68px;top:209.51px;width:53.20px;height:14.57px;background:#ddebf7;"></div>
<div class="c" style="left:556.18px;top:209.51px;width:45.70px;height:14.57px;line-height:16.57px;color:#222;font-size:9.5px"><span style="float:left">$</span><span style="float:right">112.00</span></div>
<div class="a" style="left:607.88px;top:209.51px;width:53.20px;height:14.57px;background:#ddebf7;"></div>
<div class="c" style="left:611.38px;top:209.51px;width:45.70px;height:14.57px;line-height:16.57px;color:#222;font-size:9.5px"><span style="float:left">$</span><span style="float:right">980.00</span></div>
<div class="a" style="left:663.08px;top:209.51px;width:53.20px;height:14.57px;background:#ddebf7;"></div>
<div class="c" style="left:666.58px;top:209.51px;width:45.70px;height:14.57px;line-height:16.57px;color:#222;font-size:9.5px"><span style="float:left">$</span><span style="float:right">760.00</span></div>
<div class="a" style="left:718.28px;top:209.51px;width:53.20px;height:14.57px;background:#ddebf7;"></div>
<div class="c" style="left:721.78px;top:209.51px;width:45.70px;height:14.57px;line-height:16.57px;color:#222;font-size:9.5px"><span style="float:left">$</span><span style="float:right">450.00</span></div>
<div class="a" style="left:773.47px;top:209.51px;width:53.20px;height:14.57px;background:#ddebf7;"></div>
<div class="c" style="left:776.97px;top:209.51px;width:45.70px;height:14.57px;line-height:16.57px;color:#222;font-size:9.5px"><span style="float:left">$</span><span style="float:right">850.00</span></div>
<div class="a" style="left:828.67px;top:209.51px;width:53.20px;height:14.57px;background:#bdd7ee;"></div>
<div class="c" style="left:832.17px;top:209.51px;width:45.70px;height:14.57px;line-height:16.57px;color:#222;font-size:9.5px"><span style="float:left">$</span><span style="float:right">6,417.00</span></div>
<div class="a" style="left:55.90px;top:226.08px;width:108.40px;height:14.57px;background:#5b9bd5;"></div>
<div class="c" style="left:56.90px;top:226.08px;height:14.57px;line-height:16.57px;color:#fff;font-weight:bold;font-size:9.45px">Overhead costs</div>
<div class="a" style="left:166.30px;top:226.08px;width:53.20px;height:14.57px;background:#ddebf7;"></div>
<div class="c" style="left:169.80px;top:226.08px;width:45.70px;height:14.57px;line-height:16.57px;color:#222;font-size:9.5px"><span style="float:left">$</span><span style="float:right">450.00</span></div>
<div class="a" style="left:221.49px;top:226.08px;width:53.20px;height:14.57px;background:#ddebf7;"></div>
<div class="c" style="left:224.99px;top:226.08px;width:45.70px;height:14.57px;line-height:16.57px;color:#222;font-size:9.5px"><span style="float:left">$</span><span style="float:right">650.00</span></div>
<div class="a" style="left:276.69px;top:226.08px;width:53.20px;height:14.57px;background:#ddebf7;"></div>
<div class="c" style="left:280.19px;top:226.08px;width:45.70px;height:14.57px;line-height:16.57px;color:#222;font-size:9.5px"><span style="float:left">$</span><span style="float:right">850.00</span></div>
<div class="a" style="left:331.89px;top:226.08px;width:53.20px;height:14.57px;background:#ddebf7;"></div>
<div class="c" style="left:335.39px;top:226.08px;width:45.70px;height:14.57px;line-height:16.57px;color:#222;font-size:9.5px"><span style="float:left">$</span><span style="float:right">240.00</span></div>
<div class="a" style="left:387.09px;top:226.08px;width:53.20px;height:14.57px;background:#ddebf7;"></div>
<div class="c" style="left:390.59px;top:226.08px;width:45.70px;height:14.57px;line-height:16.57px;color:#222;font-size:9.5px"><span style="float:left">$</span><span style="float:right">650.00</span></div>
<div class="a" style="left:442.29px;top:226.08px;width:53.20px;height:14.57px;background:#ddebf7;"></div>
<div class="c" style="left:445.79px;top:226.08px;width:45.70px;height:14.57px;line-height:16.57px;color:#222;font-size:9.5px"><span style="float:left">$</span><span style="float:right">330.00</span></div>
<div class="a" style="left:497.48px;top:226.08px;width:53.20px;height:14.57px;background:#ddebf7;"></div>
<div class="c" style="left:500.98px;top:226.08px;width:45.70px;height:14.57px;line-height:16.57px;color:#222;font-size:9.5px"><span style="float:left">$</span><span style="float:right">740.00</span></div>
<div class="a" style="left:552.68px;top:226.08px;width:53.20px;height:14.57px;background:#ddebf7;"></div>
<div class="c" style="left:556.18px;top:226.08px;width:45.70px;height:14.57px;line-height:16.57px;color:#222;font-size:9.5px"><span style="float:left">$</span><span style="float:right">150.00</span></div>
<div class="a" style="left:607.88px;top:226.08px;width:53.20px;height:14.57px;background:#ddebf7;"></div>
<div class="c" style="left:611.38px;top:226.08px;width:45.70px;height:14.57px;line-height:16.57px;color:#222;font-size:9.5px"><span style="float:left">$</span><span style="float:right">230.00</span></div>
<div class="a" style="left:663.08px;top:226.08px;width:53.20px;height:14.57px;background:#ddebf7;"></div>
<div class="c" style="left:666.58px;top:226.08px;width:45.70px;height:14.57px;line-height:16.57px;color:#222;font-size:9.5px"><span style="float:left">$</span><span style="float:right">150.00</span></div>
<div class="a" style="left:718.28px;top:226.08px;width:53.20px;height:14.57px;background:#ddebf7;"></div>
<div class="c" style="left:721.78px;top:226.08px;width:45.70px;height:14.57px;line-height:16.57px;color:#222;font-size:9.5px"><span style="float:left">$</span><span style="float:right">560.00</span></div>
<div class="a" style="left:773.47px;top:226.08px;width:53.20px;height:14.57px;background:#ddebf7;"></div>
<div class="c" style="left:776.97px;top:226.08px;width:45.70px;height:14.57px;line-height:16.57px;color:#222;font-size:9.5px"><span style="float:left">$</span><span style="float:right">870.00</span></div>
<div class="a" style="left:828.67px;top:226.08px;width:53.20px;height:14.57px;background:#bdd7ee;"></div>
<div class="c" style="left:832.17px;top:226.08px;width:45.70px;height:14.57px;line-height:16.57px;color:#222;font-size:9.5px"><span style="float:left">$</span><span style="float:right">5,740.00</span></div>
<div class="a" style="left:55.90px;top:242.65px;width:108.40px;height:14.57px;background:#5b9bd5;"></div>
<div class="c" style="left:56.90px;top:242.65px;height:14.57px;line-height:16.57px;color:#fff;font-weight:bold;font-size:9.45px">Gross margin</div>
<div class="a" style="left:166.30px;top:242.65px;width:53.20px;height:14.57px;background:#ddebf7;"></div>
<div class="c" style="left:169.80px;top:242.65px;width:45.70px;height:14.57px;line-height:16.57px;color:#222;font-size:9.5px"><span style="float:left">$</span><span style="float:right">4,410.00</span></div>
<div class="a" style="left:221.49px;top:242.65px;width:53.20px;height:14.57px;background:#ddebf7;"></div>
<div class="c" style="left:224.99px;top:242.65px;width:45.70px;height:14.57px;line-height:16.57px;color:#222;font-size:9.5px"><span style="float:left">$</span><span style="float:right">6,633.00</span></div>
<div class="a" style="left:276.69px;top:242.65px;width:53.20px;height:14.57px;background:#ddebf7;"></div>
<div class="c" style="left:280.19px;top:242.65px;width:45.70px;height:14.57px;line-height:16.57px;color:#222;font-size:9.5px"><span style="float:left">$</span><span style="float:right">3,376.00</span></div>
<div class="a" style="left:331.89px;top:242.65px;width:53.20px;height:14.57px;background:#ddebf7;"></div>
<div class="c" style="left:335.39px;top:242.65px;width:45.70px;height:14.57px;line-height:16.57px;color:#222;font-size:9.5px"><span style="float:left">$</span><span style="float:right">768.00</span></div>
<div class="a" style="left:387.09px;top:242.65px;width:53.20px;height:14.57px;background:#ddebf7;"></div>
<div class="c" style="left:390.59px;top:242.65px;width:45.70px;height:14.57px;line-height:16.57px;color:#222;font-size:9.5px"><span style="float:left">$</span><span style="float:right">2,688.00</span></div>
<div class="a" style="left:442.29px;top:242.65px;width:53.20px;height:14.57px;background:#ddebf7;"></div>
<div class="c" style="left:445.79px;top:242.65px;width:45.70px;height:14.57px;line-height:16.57px;color:#222;font-size:9.5px"><span style="float:left">$</span><span style="float:right">856.00</span></div>
<div class="a" style="left:497.48px;top:242.65px;width:53.20px;height:14.57px;background:#ddebf7;"></div>
<div class="c" style="left:500.98px;top:242.65px;width:45.70px;height:14.57px;line-height:16.57px;color:#222;font-size:9.5px"><span style="float:left">$</span><span style="float:right">1,734.00</span></div>
<div class="a" style="left:552.68px;top:242.65px;width:53.20px;height:14.57px;background:#ddebf7;"></div>
<div class="c" style="left:556.18px;top:242.65px;width:45.70px;height:14.57px;line-height:16.57px;color:#222;font-size:9.5px"><span style="float:left">$</span><span style="float:right">2,432.00</span></div>
<div class="a" style="left:607.88px;top:242.65px;width:53.20px;height:14.57px;background:#ddebf7;"></div>
<div class="c" style="left:611.38px;top:242.65px;width:45.70px;height:14.57px;line-height:16.57px;color:#222;font-size:9.5px"><span style="float:left">$</span><span style="float:right">1,258.00</span></div>
<div class="a" style="left:663.08px;top:242.65px;width:53.20px;height:14.57px;background:#ddebf7;"></div>
<div class="c" style="left:666.58px;top:242.65px;width:45.70px;height:14.57px;line-height:16.57px;color:#222;font-size:9.5px"><span style="float:left">$</span><span style="float:right">8,633.00</span></div>
<div class="a" style="left:718.28px;top:242.65px;width:53.20px;height:14.57px;background:#ddebf7;"></div>
<div class="c" style="left:721.78px;top:242.65px;width:45.70px;height:14.57px;line-height:16.57px;color:#222;font-size:9.5px"><span style="float:left">$</span><span style="float:right">4,472.00</span></div>
<div class="a" style="left:773.47px;top:242.65px;width:53.20px;height:14.57px;background:#ddebf7;"></div>
<div class="c" style="left:776.97px;top:242.65px;width:45.70px;height:14.57px;line-height:16.57px;color:#222;font-size:9.5px"><span style="float:left">$</span><span style="float:right">1,934.00</span></div>
<div class="a" style="left:828.67px;top:242.65px;width:53.20px;height:14.57px;background:#bdd7ee;"></div>
<div class="c" style="left:828.67px;top:242.65px;width:53.20px;height:14.57px;line-height:16.57px;text-align:center;color:#222;font-size:9.5px">########</div>
<div class="a" style="left:55.90px;top:259.22px;width:108.40px;height:14.57px;background:#5b9bd5;"></div>
<div class="c" style="left:56.90px;top:259.22px;height:14.57px;line-height:16.57px;color:#fff;font-weight:bold;font-size:9.45px">Cost of sales</div>
<div class="a" style="left:166.30px;top:259.22px;width:53.20px;height:14.57px;background:#ddebf7;"></div>
<div class="c" style="left:169.80px;top:259.22px;width:45.70px;height:14.57px;line-height:16.57px;color:#222;font-size:9.5px"><span style="float:left">$</span><span style="float:right">5,025.00</span></div>
<div class="a" style="left:221.49px;top:259.22px;width:53.20px;height:14.57px;background:#ddebf7;"></div>
<div class="c" style="left:224.99px;top:259.22px;width:45.70px;height:14.57px;line-height:16.57px;color:#222;font-size:9.5px"><span style="float:left">$</span><span style="float:right">7,228.00</span></div>
<div class="a" style="left:276.69px;top:259.22px;width:53.20px;height:14.57px;background:#ddebf7;"></div>
<div class="c" style="left:280.19px;top:259.22px;width:45.70px;height:14.57px;line-height:16.57px;color:#222;font-size:9.5px"><span style="float:left">$</span><span style="float:right">3,981.00</span></div>
<div class="a" style="left:331.89px;top:259.22px;width:53.20px;height:14.57px;background:#ddebf7;"></div>
<div class="c" style="left:335.39px;top:259.22px;width:45.70px;height:14.57px;line-height:16.57px;color:#222;font-size:9.5px"><span style="float:left">$</span><span style="float:right">1,013.00</span></div>
<div class="a" style="left:387.09px;top:259.22px;width:53.20px;height:14.57px;background:#ddebf7;"></div>
<div class="c" style="left:390.59px;top:259.22px;width:45.70px;height:14.57px;line-height:16.57px;color:#222;font-size:9.5px"><span style="float:left">$</span><span style="float:right">3,173.00</span></div>
<div class="a" style="left:442.29px;top:259.22px;width:53.20px;height:14.57px;background:#ddebf7;"></div>
<div class="c" style="left:445.79px;top:259.22px;width:45.70px;height:14.57px;line-height:16.57px;color:#222;font-size:9.5px"><span style="float:left">$</span><span style="float:right">1,156.00</span></div>
<div class="a" style="left:497.48px;top:259.22px;width:53.20px;height:14.57px;background:#ddebf7;"></div>
<div class="c" style="left:500.98px;top:259.22px;width:45.70px;height:14.57px;line-height:16.57px;color:#222;font-size:9.5px"><span style="float:left">$</span><span style="float:right">2,161.50</span></div>
<div class="a" style="left:552.68px;top:259.22px;width:53.20px;height:14.57px;background:#ddebf7;"></div>
<div class="c" style="left:556.18px;top:259.22px;width:45.70px;height:14.57px;line-height:16.57px;color:#222;font-size:9.5px"><span style="float:left">$</span><span style="float:right">2,563.00</span></div>
<div class="a" style="left:607.88px;top:259.22px;width:53.20px;height:14.57px;background:#ddebf7;"></div>
<div class="c" style="left:611.38px;top:259.22px;width:45.70px;height:14.57px;line-height:16.57px;color:#222;font-size:9.5px"><span style="float:left">$</span><span style="float:right">1,863.00</span></div>
<div class="a" style="left:663.08px;top:259.22px;width:53.20px;height:14.57px;background:#ddebf7;"></div>
<div class="c" style="left:666.58px;top:259.22px;width:45.70px;height:14.57px;line-height:16.57px;color:#222;font-size:9.5px"><span style="float:left">$</span><span style="float:right">9,088.00</span></div>
<div class="a" style="left:718.28px;top:259.22px;width:53.20px;height:14.57px;background:#ddebf7;"></div>
<div class="c" style="left:721.78px;top:259.22px;width:45.70px;height:14.57px;line-height:16.57px;color:#222;font-size:9.5px"><span style="float:left">$</span><span style="float:right">4,977.00</span></div>
<div class="a" style="left:773.47px;top:259.22px;width:53.20px;height:14.57px;background:#ddebf7;"></div>
<div class="c" style="left:776.97px;top:259.22px;width:45.70px;height:14.57px;line-height:16.57px;color:#222;font-size:9.5px"><span style="float:left">$</span><span style="float:right">2,794.00</span></div>
<div class="a" style="left:828.67px;top:259.22px;width:53.20px;height:14.57px;background:#bdd7ee;"></div>
<div class="c" style="left:828.67px;top:259.22px;width:53.20px;height:14.57px;line-height:16.57px;text-align:center;color:#222;font-size:9.5px">#NAME?</div>
<div class="a" style="left:55.90px;top:275.79px;width:108.40px;height:14.57px;background:#5b9bd5;"></div>
<div class="c" style="left:56.90px;top:275.79px;height:14.57px;line-height:16.57px;color:#fff;font-weight:bold;font-size:9.45px">Business expense</div>
<div class="a" style="left:166.30px;top:275.79px;width:53.20px;height:14.57px;background:#ddebf7;"></div>
<div class="c" style="left:169.80px;top:275.79px;width:45.70px;height:14.57px;line-height:16.57px;color:#222;font-size:9.5px"><span style="float:left">$</span><span style="float:right">1,230.00</span></div>
<div class="a" style="left:221.49px;top:275.79px;width:53.20px;height:14.57px;background:#ddebf7;"></div>
<div class="c" style="left:224.99px;top:275.79px;width:45.70px;height:14.57px;line-height:16.57px;color:#222;font-size:9.5px"><span style="float:left">$</span><span style="float:right">1,190.00</span></div>
<div class="a" style="left:276.69px;top:275.79px;width:53.20px;height:14.57px;background:#ddebf7;"></div>
<div class="c" style="left:280.19px;top:275.79px;width:45.70px;height:14.57px;line-height:16.57px;color:#222;font-size:9.5px"><span style="float:left">$</span><span style="float:right">1,210.00</span></div>
<div class="a" style="left:331.89px;top:275.79px;width:53.20px;height:14.57px;background:#ddebf7;"></div>
<div class="c" style="left:335.39px;top:275.79px;width:45.70px;height:14.57px;line-height:16.57px;color:#222;font-size:9.5px"><span style="float:left">$</span><span style="float:right">490.00</span></div>
<div class="a" style="left:387.09px;top:275.79px;width:53.20px;height:14.57px;background:#ddebf7;"></div>
<div class="c" style="left:390.59px;top:275.79px;width:45.70px;height:14.57px;line-height:16.57px;color:#222;font-size:9.5px"><span style="float:left">$</span><span style="float:right">970.00</span></div>
<div class="a" style="left:442.29px;top:275.79px;width:53.20px;height:14.57px;background:#ddebf7;"></div>
<div class="c" style="left:445.79px;top:275.79px;width:45.70px;height:14.57px;line-height:16.57px;color:#222;font-size:9.5px"><span style="float:left">$</span><span style="float:right">600.00</span></div>
<div class="a" style="left:497.48px;top:275.79px;width:53.20px;height:14.57px;background:#ddebf7;"></div>
<div class="c" style="left:500.98px;top:275.79px;width:45.70px;height:14.57px;line-height:16.57px;color:#222;font-size:9.5px"><span style="float:left">$</span><span style="float:right">855.00</span></div>
<div class="a" style="left:552.68px;top:275.79px;width:53.20px;height:14.57px;background:#ddebf7;"></div>
<div class="c" style="left:556.18px;top:275.79px;width:45.70px;height:14.57px;line-height:16.57px;color:#222;font-size:9.5px"><span style="float:left">$</span><span style="float:right">262.00</span></div>
<div class="a" style="left:607.88px;top:275.79px;width:53.20px;height:14.57px;background:#ddebf7;"></div>
<div class="c" style="left:611.38px;top:275.79px;width:45.70px;height:14.57px;line-height:16.57px;color:#222;font-size:9.5px"><span style="float:left">$</span><span style="float:right">1,210.00</span></div>
<div class="a" style="left:663.08px;top:275.79px;width:53.20px;height:14.57px;background:#ddebf7;"></div>
<div class="c" style="left:666.58px;top:275.79px;width:45.70px;height:14.57px;line-height:16.57px;color:#222;font-size:9.5px"><span style="float:left">$</span><span style="float:right">910.00</span></div>
<div class="a" style="left:718.28px;top:275.79px;width:53.20px;height:14.57px;background:#ddebf7;"></div>
<div class="c" style="left:721.78px;top:275.79px;width:45.70px;height:14.57px;line-height:16.57px;color:#222;font-size:9.5px"><span style="float:left">$</span><span style="float:right">1,010.00</span></div>
<div class="a" style="left:773.47px;top:275.79px;width:53.20px;height:14.57px;background:#ddebf7;"></div>
<div class="c" style="left:776.97px;top:275.79px;width:45.70px;height:14.57px;line-height:16.57px;color:#222;font-size:9.5px"><span style="float:left">$</span><span style="float:right">1,720.00</span></div>
<div class="a" style="left:828.67px;top:275.79px;width:53.20px;height:14.57px;background:#bdd7ee;"></div>
<div class="c" style="left:828.67px;top:275.79px;width:53.20px;height:14.57px;line-height:16.57px;text-align:center;color:#222;font-size:9.5px">########</div>
<div class="a" style="left:55.90px;top:292.36px;width:108.40px;height:14.57px;background:#5b9bd5;"></div>
<div class="c" style="left:56.90px;top:292.36px;height:14.57px;line-height:16.57px;color:#fff;font-weight:bold;font-size:9.45px">Management expenses</div>
<div class="a" style="left:166.30px;top:292.36px;width:53.20px;height:14.57px;background:#c6efce;"></div>
<div class="c" style="left:166.30px;top:292.36px;width:53.20px;height:14.57px;line-height:18.07px;text-align:center;color:#006100;font-weight:bold;font-size:10.6px">28%</div>
<div class="a" style="left:221.49px;top:292.36px;width:53.20px;height:14.57px;background:#ffc7ce;"></div>
<div class="c" style="left:221.49px;top:292.36px;width:53.20px;height:14.57px;line-height:18.07px;text-align:center;color:#9c0006;font-weight:bold;font-size:10.6px">18%</div>
<div class="a" style="left:276.69px;top:292.36px;width:53.20px;height:14.57px;background:#c6efce;"></div>
<div class="c" style="left:276.69px;top:292.36px;width:53.20px;height:14.57px;line-height:18.07px;text-align:center;color:#006100;font-weight:bold;font-size:10.6px">36%</div>
<div class="a" style="left:331.89px;top:292.36px;width:53.20px;height:14.57px;background:#c6efce;"></div>
<div class="c" style="left:331.89px;top:292.36px;width:53.20px;height:14.57px;line-height:18.07px;text-align:center;color:#006100;font-weight:bold;font-size:10.6px">40%</div>
<div class="a" style="left:387.09px;top:292.36px;width:53.20px;height:14.57px;background:#c6efce;"></div>
<div class="c" style="left:387.09px;top:292.36px;width:53.20px;height:14.57px;line-height:18.07px;text-align:center;color:#006100;font-weight:bold;font-size:10.6px"></div>
<div class="a" style="left:442.29px;top:292.36px;width:53.20px;height:14.57px;background:#ffc7ce;"></div>
<div class="c" style="left:442.29px;top:292.36px;width:53.20px;height:14.57px;line-height:18.07px;text-align:center;color:#9c0006;font-weight:bold;font-size:10.6px">15%</div>
<div class="a" style="left:497.48px;top:292.36px;width:53.20px;height:14.57px;background:#c6efce;"></div>
<div class="c" style="left:497.48px;top:292.36px;width:53.20px;height:14.57px;line-height:18.07px;text-align:center;color:#006100;font-weight:bold;font-size:10.6px">49%</div>
<div class="a" style="left:552.68px;top:292.36px;width:53.20px;height:14.57px;background:#ffc7ce;"></div>
<div class="c" style="left:552.68px;top:292.36px;width:53.20px;height:14.57px;line-height:18.07px;text-align:center;color:#9c0006;font-weight:bold;font-size:10.6px">11%</div>
<div class="a" style="left:607.88px;top:292.36px;width:53.20px;height:14.57px;background:#c6efce;"></div>
<div class="c" style="left:607.88px;top:292.36px;width:53.20px;height:14.57px;line-height:18.07px;text-align:center;color:#006100;font-weight:bold;font-size:10.6px">96%</div>
<div class="a" style="left:663.08px;top:292.36px;width:53.20px;height:14.57px;background:#ffc7ce;"></div>
<div class="c" style="left:663.08px;top:292.36px;width:53.20px;height:14.57px;line-height:18.07px;text-align:center;color:#9c0006;font-weight:bold;font-size:10.6px">11%</div>
<div class="a" style="left:718.28px;top:292.36px;width:53.20px;height:14.57px;background:#ffc7ce;"></div>
<div class="c" style="left:718.28px;top:292.36px;width:53.20px;height:14.57px;line-height:18.07px;text-align:center;color:#9c0006;font-weight:bold;font-size:10.6px">23%</div>
<div class="a" style="left:773.47px;top:292.36px;width:53.20px;height:14.57px;background:#c6efce;"></div>
<div class="c" style="left:773.47px;top:292.36px;width:53.20px;height:14.57px;line-height:18.07px;text-align:center;color:#006100;font-weight:bold;font-size:10.6px">89%</div>
<div class="a" style="left:828.67px;top:292.36px;width:53.20px;height:14.57px;background:#c6efce;"></div>
<div class="c" style="left:828.67px;top:292.36px;width:53.20px;height:14.57px;line-height:18.07px;text-align:center;color:#006100;font-weight:bold;font-size:10.6px">58%</div>
<div class="a" style="left:55.90px;top:308.93px;width:108.40px;height:14.57px;background:#5b9bd5;"></div>
<div class="c" style="left:56.90px;top:308.93px;height:14.57px;line-height:16.57px;color:#fff;font-weight:bold;font-size:9.45px">Other income</div>
<div class="a" style="left:166.30px;top:308.93px;width:53.20px;height:14.57px;background:#ddebf7;"></div>
<div class="c" style="left:169.80px;top:308.93px;width:45.70px;height:14.57px;line-height:16.57px;color:#222;font-size:9.5px"><span style="float:left">$</span><span style="float:right">3,261.00</span></div>
<div class="a" style="left:221.49px;top:308.93px;width:53.20px;height:14.57px;background:#ddebf7;"></div>
<div class="c" style="left:224.99px;top:308.93px;width:45.70px;height:14.57px;line-height:16.57px;color:#222;font-size:9.5px"><span style="float:left">$</span><span style="float:right">4,574.80</span></div>
<div class="a" style="left:276.69px;top:308.93px;width:53.20px;height:14.57px;background:#ddebf7;"></div>
<div class="c" style="left:280.19px;top:308.93px;width:45.70px;height:14.57px;line-height:16.57px;color:#222;font-size:9.5px"><span style="float:left">$</span><span style="float:right">2,630.60</span></div>
<div class="a" style="left:331.89px;top:308.93px;width:53.20px;height:14.57px;background:#ddebf7;"></div>
<div class="c" style="left:335.39px;top:308.93px;width:45.70px;height:14.57px;line-height:16.57px;color:#222;font-size:9.5px"><span style="float:left">$</span><span style="float:right">1,258.00</span></div>
<div class="a" style="left:387.09px;top:308.93px;width:53.20px;height:14.57px;background:#ddebf7;"></div>
<div class="c" style="left:390.59px;top:308.93px;width:45.70px;height:14.57px;line-height:16.57px;color:#222;font-size:9.5px"><span style="float:left">$</span><span style="float:right">2,194.80</span></div>
<div class="a" style="left:442.29px;top:308.93px;width:53.20px;height:14.57px;background:#ddebf7;"></div>
<div class="c" style="left:445.79px;top:308.93px;width:45.70px;height:14.57px;line-height:16.57px;color:#222;font-size:9.5px"><span style="float:left">$</span><span style="float:right">1,183.00</span></div>
<div class="a" style="left:497.48px;top:308.93px;width:53.20px;height:14.57px;background:#ddebf7;"></div>
<div class="c" style="left:500.98px;top:308.93px;width:45.70px;height:14.57px;line-height:16.57px;color:#222;font-size:9.5px"><span style="float:left">$</span><span style="float:right">1,467.90</span></div>
<div class="a" style="left:552.68px;top:308.93px;width:53.20px;height:14.57px;background:#ddebf7;"></div>
<div class="c" style="left:556.18px;top:308.93px;width:45.70px;height:14.57px;line-height:16.57px;color:#222;font-size:9.5px"><span style="float:left">$</span><span style="float:right">1,590.20</span></div>
<div class="a" style="left:607.88px;top:308.93px;width:53.20px;height:14.57px;background:#ddebf7;"></div>
<div class="c" style="left:611.38px;top:308.93px;width:45.70px;height:14.57px;line-height:16.57px;color:#222;font-size:9.5px"><span style="float:left">$</span><span style="float:right">1,359.80</span></div>
<div class="a" style="left:663.08px;top:308.93px;width:53.20px;height:14.57px;background:#ddebf7;"></div>
<div class="c" style="left:666.58px;top:308.93px;width:45.70px;height:14.57px;line-height:16.57px;color:#222;font-size:9.5px"><span style="float:left">$</span><span style="float:right">5,634.80</span></div>
<div class="a" style="left:718.28px;top:308.93px;width:53.20px;height:14.57px;background:#ddebf7;"></div>
<div class="c" style="left:721.78px;top:308.93px;width:45.70px;height:14.57px;line-height:16.57px;color:#222;font-size:9.5px"><span style="float:left">$</span><span style="float:right">3,188.20</span></div>
<div class="a" style="left:773.47px;top:308.93px;width:53.20px;height:14.57px;background:#ddebf7;"></div>
<div class="c" style="left:776.97px;top:308.93px;width:45.70px;height:14.57px;line-height:16.57px;color:#222;font-size:9.5px"><span style="float:left">$</span><span style="float:right">2,020.40</span></div>
<div class="a" style="left:828.67px;top:308.93px;width:53.20px;height:14.57px;background:#bdd7ee;"></div>
<div class="c" style="left:828.67px;top:308.93px;width:53.20px;height:14.57px;line-height:16.57px;text-align:center;color:#222;font-size:9.5px">#NAME?</div>
<div class="a" style="left:656.08px;top:192.94px;width:0;height:0;border-top:5px solid #f29a1c;border-left:5px solid transparent"></div>
<div class="a" style="left:876.87px;top:192.94px;width:0;height:0;border-top:5px solid #f29a1c;border-left:5px solid transparent"></div>
<div class="c" style="left:111.10px;top:341.57px;width:54.20px;height:16.07px;line-height:17.07px;padding-left:1px;color:#222;font-size:10.9px">Row Labels</div>
<div class="c" style="left:166.30px;top:341.57px;width:54.20px;height:16.07px;line-height:17.07px;padding-left:1px;color:#222;font-size:10.9px">Sum of February</div>
<div class="c" style="left:221.49px;top:341.57px;width:54.20px;height:16.07px;line-height:17.07px;padding-left:1px;color:#222;font-size:10.9px">Sum of July</div>
<div class="c" style="left:276.69px;top:341.57px;width:54.20px;height:16.07px;line-height:17.07px;padding-left:1px;color:#222;font-size:10.9px">Sum of March</div>
<div class="c" style="left:111.10px;top:358.14px;width:54.20px;height:16.07px;line-height:17.07px;text-align:right;padding-right:1.5px;color:#222;font-size:10.9px">5640</div>
<div class="c" style="left:166.30px;top:358.14px;width:54.20px;height:16.07px;line-height:17.07px;text-align:right;padding-right:1.5px;color:#222;font-size:10.9px">7823</div>
<div class="c" style="left:221.49px;top:358.14px;width:54.20px;height:16.07px;line-height:17.07px;text-align:right;padding-right:1.5px;color:#222;font-size:10.9px">2589</div>
<div class="c" style="left:276.69px;top:358.14px;width:54.20px;height:16.07px;line-height:17.07px;text-align:right;padding-right:1.5px;color:#222;font-size:10.9px">4586</div>
<div class="c" style="left:111.10px;top:374.71px;width:54.20px;height:16.07px;line-height:17.07px;text-align:right;padding-right:1.5px;color:#222;font-size:10.9px">5025</div>
<div class="c" style="left:166.30px;top:374.71px;width:54.20px;height:16.07px;line-height:17.07px;text-align:right;padding-right:1.5px;color:#222;font-size:10.9px">7228</div>
<div class="c" style="left:221.49px;top:374.71px;width:54.20px;height:16.07px;line-height:17.07px;text-align:right;padding-right:1.5px;color:#222;font-size:10.9px">2161.5</div>
<div class="c" style="left:276.69px;top:374.71px;width:54.20px;height:16.07px;line-height:17.07px;text-align:right;padding-right:1.5px;color:#222;font-size:10.9px">3981</div>
<div class="c" style="left:111.10px;top:391.28px;width:54.20px;height:16.07px;line-height:17.07px;text-align:right;padding-right:1.5px;color:#222;font-size:10.9px">4410</div>
<div class="c" style="left:166.30px;top:391.28px;width:54.20px;height:16.07px;line-height:17.07px;text-align:right;padding-right:1.5px;color:#222;font-size:10.9px">6633</div>
<div class="c" style="left:221.49px;top:391.28px;width:54.20px;height:16.07px;line-height:17.07px;text-align:right;padding-right:1.5px;color:#222;font-size:10.9px">1734</div>
<div class="c" style="left:276.69px;top:391.28px;width:54.20px;height:16.07px;line-height:17.07px;text-align:right;padding-right:1.5px;color:#222;font-size:10.9px">3376</div>
<div class="c" style="left:111.10px;top:407.85px;width:54.20px;height:16.07px;line-height:17.07px;text-align:right;padding-right:1.5px;color:#222;font-size:10.9px">1230</div>
<div class="c" style="left:166.30px;top:407.85px;width:54.20px;height:16.07px;line-height:17.07px;text-align:right;padding-right:1.5px;color:#222;font-size:10.9px">1190</div>
<div class="c" style="left:221.49px;top:407.85px;width:54.20px;height:16.07px;line-height:17.07px;text-align:right;padding-right:1.5px;color:#222;font-size:10.9px">855</div>
<div class="c" style="left:276.69px;top:407.85px;width:54.20px;height:16.07px;line-height:17.07px;text-align:right;padding-right:1.5px;color:#222;font-size:10.9px">1210</div>
<div class="c" style="left:111.10px;top:424.42px;width:54.20px;height:16.07px;line-height:17.07px;text-align:right;padding-right:1.5px;color:#222;font-size:10.9px">450</div>
<div class="c" style="left:166.30px;top:424.42px;width:54.20px;height:16.07px;line-height:17.07px;text-align:right;padding-right:1.5px;color:#222;font-size:10.9px">650</div>
<div class="c" style="left:221.49px;top:424.42px;width:54.20px;height:16.07px;line-height:17.07px;text-align:right;padding-right:1.5px;color:#222;font-size:10.9px">740</div>
<div class="c" style="left:276.69px;top:424.42px;width:54.20px;height:16.07px;line-height:17.07px;text-align:right;padding-right:1.5px;color:#222;font-size:10.9px">850</div>
<div class="c" style="left:111.10px;top:440.99px;width:54.20px;height:16.07px;line-height:17.07px;padding-left:1px;color:#222;font-size:10.9px">Grand Total</div>
<div class="c" style="left:166.30px;top:440.99px;width:54.20px;height:16.07px;line-height:17.07px;text-align:right;padding-right:1.5px;color:#222;font-size:10.9px">23524</div>
<div class="c" style="left:221.49px;top:440.99px;width:54.20px;height:16.07px;line-height:17.07px;text-align:right;padding-right:1.5px;color:#222;font-size:10.9px">8079.5</div>
<div class="c" style="left:276.69px;top:440.99px;width:54.20px;height:16.07px;line-height:17.07px;text-align:right;padding-right:1.5px;color:#222;font-size:10.9px">14003</div>
<div class="a" style="left:165.00px;top:490.00px;width:663.00px;height:34.00px;background:#fff;"></div>
<div class="a" style="left:54.90px;top:490.20px;width:109.40px;height:16.57px;background:#5b9bd5;"></div>
<div class="c" style="left:56.40px;top:490.20px;height:16.57px;line-height:19.07px;color:#fff;font-weight:bold;font-size:10.7px">Sale</div>
<div class="c" style="left:170.30px;top:490.20px;width:45.20px;height:16.57px;line-height:18.57px;color:#222;font-size:9.5px"><span style="float:left">$</span><span style="float:right">5,640.00</span></div>
<div class="c" style="left:225.49px;top:490.20px;width:45.20px;height:16.57px;line-height:18.57px;color:#222;font-size:9.5px"><span style="float:left">$</span><span style="float:right">7,823.00</span></div>
<div class="c" style="left:280.69px;top:490.20px;width:45.20px;height:16.57px;line-height:18.57px;color:#222;font-size:9.5px"><span style="float:left">$</span><span style="float:right">4,586.00</span></div>
<div class="c" style="left:501.48px;top:490.20px;width:45.20px;height:16.57px;line-height:18.57px;color:#222;font-size:9.5px"><span style="float:left">$</span><span style="float:right">2,589.00</span></div>
<div class="c" style="left:556.68px;top:490.20px;width:45.20px;height:16.57px;line-height:18.57px;color:#222;font-size:9.5px"><span style="float:left">$</span><span style="float:right">2,694.00</span></div>
<div class="c" style="left:611.88px;top:490.20px;width:45.20px;height:16.57px;line-height:18.57px;color:#222;font-size:9.5px"><span style="float:left">$</span><span style="float:right">2,468.00</span></div>
<div class="c" style="left:667.08px;top:490.20px;width:45.20px;height:16.57px;line-height:18.57px;color:#222;font-size:9.5px"><span style="float:left">$</span><span style="float:right">9,543.00</span></div>
<div class="c" style="left:722.28px;top:490.20px;width:45.20px;height:16.57px;line-height:18.57px;color:#222;font-size:9.5px"><span style="float:left">$</span><span style="float:right">5,482.00</span></div>
<div class="c" style="left:777.47px;top:490.20px;width:45.20px;height:16.57px;line-height:18.57px;color:#222;font-size:9.5px"><span style="float:left">$</span><span style="float:right">3,654.00</span></div>
<div class="a" style="left:54.90px;top:506.77px;width:109.40px;height:16.57px;background:#5b9bd5;"></div>
<div class="c" style="left:56.40px;top:506.77px;height:16.57px;line-height:19.07px;color:#fff;font-weight:bold;font-size:10.7px">Gross margin</div>
<div class="c" style="left:170.30px;top:506.77px;width:45.20px;height:16.57px;line-height:18.57px;color:#222;font-size:9.5px"><span style="float:left">$</span><span style="float:right">4,410.00</span></div>
<div class="c" style="left:225.49px;top:506.77px;width:45.20px;height:16.57px;line-height:18.57px;color:#222;font-size:9.5px"><span style="float:left">$</span><span style="float:right">6,633.00</span></div>
<div class="c" style="left:280.69px;top:506.77px;width:45.20px;height:16.57px;line-height:18.57px;color:#222;font-size:9.5px"><span style="float:left">$</span><span style="float:right">3,376.00</span></div>
<div class="c" style="left:501.48px;top:506.77px;width:45.20px;height:16.57px;line-height:18.57px;color:#222;font-size:9.5px"><span style="float:left">$</span><span style="float:right">1,734.00</span></div>
<div class="c" style="left:556.68px;top:506.77px;width:45.20px;height:16.57px;line-height:18.57px;color:#222;font-size:9.5px"><span style="float:left">$</span><span style="float:right">2,432.00</span></div>
<div class="c" style="left:611.88px;top:506.77px;width:45.20px;height:16.57px;line-height:18.57px;color:#222;font-size:9.5px"><span style="float:left">$</span><span style="float:right">1,258.00</span></div>
<div class="c" style="left:667.08px;top:506.77px;width:45.20px;height:16.57px;line-height:18.57px;color:#222;font-size:9.5px"><span style="float:left">$</span><span style="float:right">8,633.00</span></div>
<div class="c" style="left:722.28px;top:506.77px;width:45.20px;height:16.57px;line-height:18.57px;color:#222;font-size:9.5px"><span style="float:left">$</span><span style="float:right">4,472.00</span></div>
<div class="c" style="left:777.47px;top:506.77px;width:45.20px;height:16.57px;line-height:18.57px;color:#222;font-size:9.5px"><span style="float:left">$</span><span style="float:right">1,934.00</span></div>
<div class="a" style="left:165.00px;top:490.00px;width:1.00px;height:34.00px;background:#3f7f96;"></div>
<div class="a" style="left:220.00px;top:490.00px;width:1.00px;height:34.00px;background:#5b9bd5;"></div>
<div class="a" style="left:275.00px;top:490.00px;width:1.00px;height:34.00px;background:#5b9bd5;"></div>
<div class="a" style="left:330.00px;top:490.00px;width:1.00px;height:34.00px;background:#5b9bd5;"></div>
<div class="a" style="left:386.00px;top:490.00px;width:1.00px;height:34.00px;background:#5b9bd5;"></div>
<div class="a" style="left:441.00px;top:490.00px;width:1.00px;height:34.00px;background:#5b9bd5;"></div>
<div class="a" style="left:496.00px;top:490.00px;width:1.00px;height:34.00px;background:#5b9bd5;"></div>
<div class="a" style="left:551.00px;top:490.00px;width:1.00px;height:34.00px;background:#5b9bd5;"></div>
<div class="a" style="left:606.00px;top:490.00px;width:1.00px;height:34.00px;background:#5b9bd5;"></div>
<div class="a" style="left:662.00px;top:490.00px;width:1.00px;height:34.00px;background:#5b9bd5;"></div>
<div class="a" style="left:717.00px;top:490.00px;width:1.00px;height:34.00px;background:#5b9bd5;"></div>
<div class="a" style="left:772.00px;top:490.00px;width:1.00px;height:34.00px;background:#5b9bd5;"></div>
<div class="a" style="left:827.00px;top:490.00px;width:1.00px;height:34.00px;background:#5b9bd5;"></div>
<div class="a" style="left:165.00px;top:490.00px;width:663.00px;height:1.00px;background:#5b9bd5;"></div>
<div class="a" style="left:165.00px;top:523.00px;width:663.00px;height:1.00px;background:#5b9bd5;"></div>
<div class="a" style="left:165.00px;top:505.00px;width:663.00px;height:2.00px;background:#a9cbeb;"></div>
<div class="a" style="left:54.90px;top:506.27px;width:109.40px;height:1.00px;background:#a9c9ea;"></div>
<svg class="a" style="left:54px;top:490px" width="112" height="34"><rect x="0.5" y="0.5" width="111" height="33" fill="none" stroke="#2b6b86" stroke-width="1" stroke-dasharray="2 2"/></svg>
<div class="a" style="left:334px;top:214.5px;width:159px;height:323px;background:#fff;border-radius:4px;box-shadow:0 2px 8px rgba(0,0,0,0.22);"></div>
<div class="a" style="left:334px;top:482px;width:159px;height:22.5px;background:#d8d8d8"></div>
<div class="a" style="left:352.5px;top:223.5px;font-size:9.5px;line-height:14px;color:#505050;white-space:nowrap">Paste (P)</div>
<div class="a" style="left:352.5px;top:245.7px;font-size:9.5px;line-height:14px;color:#505050;white-space:nowrap">Paste only formula (F)</div>
<div class="a" style="left:352.5px;top:268.3px;font-size:9.5px;line-height:14px;color:#505050;white-space:nowrap">Formula + number format (O)</div>
<div class="a" style="left:352.5px;top:290.5px;font-size:9.5px;line-height:14px;color:#505050;white-space:nowrap">Formula + all formatting (K)</div>
<div class="a" style="left:352.5px;top:313.0px;font-size:9.5px;line-height:14px;color:#505050;white-space:nowrap">Formula without borders (B)</div>
<div class="a" style="left:352.5px;top:335.3px;font-size:9.5px;line-height:14px;color:#505050;white-space:nowrap">Formula + column width (W)</div>
<div class="a" style="left:352.5px;top:357.8px;font-size:9.5px;line-height:14px;color:#505050;white-space:nowrap">Transpose (T)</div>
<div class="a" style="left:352.5px;top:387.8px;font-size:9.5px;line-height:14px;color:#505050;white-space:nowrap">Paste only value (V)</div>
<div class="a" style="left:352.5px;top:410.3px;font-size:9.5px;line-height:14px;color:#505050;white-space:nowrap">Value + number format (A)</div>
<div class="a" style="left:352.5px;top:432.6px;font-size:9.5px;line-height:14px;color:#505050;white-space:nowrap">Value + all formatting (E)</div>
<div class="a" style="left:352.5px;top:463.0px;font-size:9.5px;line-height:14px;color:#505050;white-space:nowrap">Paste only formatting (R)</div>
<div class="a" style="left:352.5px;top:485.4px;font-size:9.5px;line-height:14px;color:#505050;white-space:nowrap">Paste link (N)</div>
<div class="a" style="left:352.5px;top:515.2px;font-size:9.5px;line-height:14px;color:#505050;white-space:nowrap">Paste special</div>
<div class="a" style="left:334px;top:380px;width:159px;height:1px;background:#e3e3e3"></div>
<div class="a" style="left:334px;top:455.5px;width:159px;height:1px;background:#e3e3e3"></div>
<div class="a" style="left:334px;top:508px;width:159px;height:1px;background:#e3e3e3"></div>
<svg class="a" style="left:340px;top:486px" width="12" height="12"><path d="M1.8 6.2L4.3 8.8L9.6 2.8" fill="none" stroke="#444" stroke-width="1.4"/></svg>
<div class="a" style="left:461.5px;top:136px;width:397px;height:35px;background:#fff;border-radius:4px;box-shadow:0 1px 5px rgba(0,0,0,0.2)"></div>
<div class="a" style="left:472px;top:139.5px;font-size:9.5px;line-height:13.2px;color:#444;white-space:nowrap">The link to an external source has been added. You can update such links in the Data tab.<br>Click to close the tip</div>
<svg class="a" style="left:0;top:104px" width="32" height="180" viewBox="0 104 32 180">
<g fill="none" stroke="#555" stroke-width="1.1">
<circle cx="13.6" cy="130" r="5"/><path d="M17.2 133.6L20.8 137.2"/>
<path d="M7.5 157.5H21.5V166.5H12.5L10.5 168.8L9.8 166.5H7.5Z"/><path d="M9.5 160.2H19.5M9.5 162.4H19.5M9.5 164.6H15"/>
<path d="M7.5 198.5V190.5H19.5V193"/><path d="M9.5 193.5H21.5V200.5H19L20 202L16.5 200.5H9.5Z" fill="#f1f1f1"/>
<circle cx="262.2" cy="0" r="0"/>
<circle cx="14.6" cy="261.8" r="6.2"/><path d="M14.6 259V265"/>
</g>
<rect x="15.3" y="164.8" width="8" height="5.2" rx="1.2" fill="#f7d23e"/><path d="M16.8 166.5H21.8M16.8 168.3H21.8" stroke="#8a6d00" stroke-width="0.8"/>
<circle cx="12.5" cy="197" r="0.75" fill="#555"/><circle cx="15.5" cy="197" r="0.75" fill="#555"/><circle cx="18.5" cy="197" r="0.75" fill="#555"/>

<text x="8" y="228.6" font-family="Liberation Sans" font-size="6.8" fill="#555" letter-spacing="-0.3">ABC</text>
<path d="M13.2 230.6L15.4 233L21 227.2" fill="none" stroke="#555" stroke-width="1.3"/>
</svg>
<svg class="a" style="left:992px;top:104px" width="32" height="310" viewBox="992 104 32 310">
<g fill="none" stroke="#666" stroke-width="1">
<rect x="1002.5" y="125.5" width="13" height="10"/><rect x="1004.5" y="127.5" width="9" height="6" fill="#8c8c8c" stroke="#666"/>
</g>
<g fill="none" stroke="#999" stroke-width="1">
<rect x="1003.5" y="158.5" width="12" height="9"/><path d="M1003.5 161.5H1015.5M1003.5 164.5H1015.5M1007.5 158.5V167.5M1011.5 158.5V167.5"/>
<path d="M1003.5 198.5V190.5H1011.5V193.5"/><circle cx="1011.2" cy="198.2" r="4.3" fill="#f1f1f1"/>
<rect x="1003.5" y="223.5" width="11" height="11"/><path d="M1004 233L1007.5 229L1010 231.5L1014 227.5"/><circle cx="1006.5" cy="226.5" r="0.9"/>
<path d="M1004.5 266.5V262.5H1007V266.5M1008.5 266.5V259.5H1011V266.5M1012.5 266.5V256.5H1015V266.5Z"/>
<path d="M1004 332.5C1006.5 330 1011.5 330 1014 332.5"/>
<rect x="1003.5" y="354.5" width="4" height="4"/><rect x="1003.5" y="360.5" width="4" height="5"/><path d="M1009.5 355.5H1015.5M1009.5 362.5C1012 362.5 1014.5 361.5 1014.5 359M1013 360.5L1014.5 359L1016 360.5"/>
<path d="M1003.5 386.5H1013.5V396.5H1003.5Z M1003.5 389.5H1013.5M1003.5 392.5H1013.5"/>
</g>
<path d="M1011.2 290V300M1013 290V300" stroke="#999" stroke-width="1"/><path d="M1011.5 290H1008.5C1006.5 290 1005.5 291.5 1005.5 293C1005.5 294.5 1006.5 296 1008.5 296H1011.5Z" fill="#999"/>
<text x="1004" y="327" font-family="Liberation Sans" font-size="9" fill="#999">Ta</text>
<path d="M1010.5 395H1016.5L1013.5 399Z" fill="#999"/>
</svg>
<div class="a" style="left:980px;top:126px;width:11px;height:439px;background:#e2e2e2"></div>
<div class="a" style="left:981px;top:191px;width:9px;height:299px;background:#f4f4f4;border:1px solid #dadada"></div>
<div class="a" style="left:981px;top:128px;width:9px;height:10px;background:#f7f7f7"></div>
<svg class="a" style="left:981px;top:128px" width="9" height="10"><path d="M2.3 6.2L4.5 3.6L6.7 6.2Z" fill="#b5b5b5"/></svg>
<div class="a" style="left:981px;top:543px;width:9px;height:10px;background:#f7f7f7"></div>
<svg class="a" style="left:981px;top:543px" width="9" height="10"><path d="M2.3 3.8L4.5 6.4L6.7 3.8Z" fill="#b5b5b5"/></svg>
<div class="a" style="left:983px;top:336px;width:5px;height:1px;background:#c4c4c4"></div><div class="a" style="left:983px;top:338px;width:5px;height:1px;background:#c4c4c4"></div><div class="a" style="left:983px;top:340px;width:5px;height:1px;background:#c4c4c4"></div>
<div class="a" style="left:33px;top:554.5px;width:947px;height:11px;background:#e2e2e2"></div>
<div class="a" style="left:45.5px;top:555.5px;width:873px;height:9px;background:#f4f4f4;border:1px solid #dadada"></div>
<div class="a" style="left:34px;top:555px;width:10px;height:9.5px;background:#f7f7f7"></div>
<svg class="a" style="left:34px;top:555px" width="10" height="10"><path d="M6.2 2.5L3.6 4.8L6.2 7.1Z" fill="#b5b5b5"/></svg>
<div class="a" style="left:969px;top:555px;width:10px;height:9.5px;background:#f7f7f7"></div>
<svg class="a" style="left:969px;top:555px" width="10" height="10"><path d="M3.8 2.5L6.4 4.8L3.8 7.1Z" fill="#b5b5b5"/></svg>
<div class="a" style="left:478px;top:558px;width:1px;height:4px;background:#c4c4c4"></div><div class="a" style="left:480px;top:558px;width:1px;height:4px;background:#c4c4c4"></div><div class="a" style="left:482px;top:558px;width:1px;height:4px;background:#c4c4c4"></div>
<div class="a" style="left:0;top:565px;width:1024px;height:2px;background:#dadada"></div>
<div class="a" style="left:0;top:567px;width:1024px;height:19px;background:#f1f1f1"></div>
<svg class="a" style="left:0;top:566px" width="1024" height="20" viewBox="0 566 1024 20">
<path d="M20.2 574V582L13.6 578Z" fill="#999"/><path d="M34 574V582L40.4 578Z" fill="#999"/>
<rect x="56.5" y="566" width="1" height="20" fill="#e2e2e2"/>
<path d="M72.5 572V582M67.5 577H77.5" stroke="#555" stroke-width="1.1"/>
<path d="M88 573.5H97M88 577H97M88 580.5H97" stroke="#555" stroke-width="1.1"/>
<rect x="108" y="566" width="1" height="20" fill="#e2e2e2"/>
<rect x="158.5" y="566.8" width="49.5" height="19.2" fill="#f7f7f7"/>
<rect x="158.5" y="566.8" width="49.5" height="3" fill="#40865c"/>
<rect x="158" y="566.8" width="1" height="20" fill="#e2e2e2"/><rect x="208" y="566.8" width="1" height="20" fill="#e2e2e2"/>
<path d="M886 578.5H896" stroke="#666" stroke-width="1.1"/>
<path d="M983.5 572.5V582.5M978.5 577.5H988.5" stroke="#555" stroke-width="1.1"/>
</svg>
<div class="a" style="left:110px;top:570px;width:48px;text-align:center;font-size:9.1px;line-height:14px;color:#aaa">Sheet1</div>
<div class="a" style="left:158.5px;top:570px;width:49.5px;text-align:center;font-size:10px;line-height:14px;color:#333;font-weight:bold;font-size:9.1px">Sheet2</div>
<div class="a" style="left:450px;top:570.5px;width:200px;text-align:center;font-size:9.65px;line-height:14px;color:#444;font-weight:bold">All changes saved</div>
<div class="a" style="left:900px;top:570.5px;width:74px;text-align:center;font-size:9.6px;line-height:14px;color:#444;font-weight:bold">Zoom 100%</div>
</body></html>
